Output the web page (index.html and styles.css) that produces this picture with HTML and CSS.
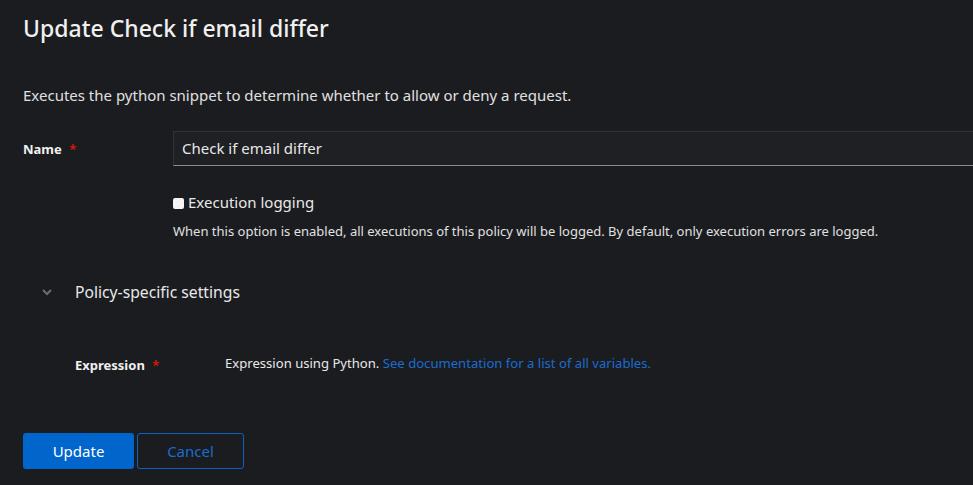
FILE: index.html
```html
<!DOCTYPE html>
<html>
<head>
<meta charset="utf-8">
<link rel="stylesheet" href="styles.css">
</head>
<body>
<div class="page">
  <h1 class="title">Update Check if email differ</h1>
  <p class="desc">Executes the python snippet to determine whether to allow or deny a request.</p>
  <div class="row name-row">
    <label class="label">Name <span class="req">*</span></label>
    <div class="input">Check if email differ</div>
  </div>
  <div class="row check-row">
    <div class="label"></div>
    <div class="check-col">
      <label class="check"><span class="box"></span>Execution logging</label>
      <div class="help">When this option is enabled, all executions of this policy will be logged. By default, only execution errors are logged.</div>
    </div>
  </div>
  <div class="section">
    <svg class="chev" width="10" height="8" viewBox="0 0 10 8"><path d="M1 2 L5 6 L9 2" fill="none" stroke="#6a6e73" stroke-width="2"/></svg>
    <span class="section-title">Policy-specific settings</span>
  </div>
  <div class="expr-row">
    <label class="label2">Expression <span class="req">*</span></label>
    <div class="expr-help">Expression using Python. <a class="link">See documentation for a list of all variables.</a></div>
  </div>
  <div class="actions">
    <button class="btn primary">Update</button>
    <button class="btn secondary">Cancel</button>
  </div>
</div>
</body>
</html>
```
FILE: styles.css
```css
html, body {
  margin: 0;
  padding: 0;
  background: #1b1c1f;
  color: #e0e0e0;
  font-family: "Noto Sans", "Open Sans", sans-serif;
  overflow: hidden;
}
.page {
  padding: 14px 0 0 23px;
}
.title {
  margin: 0;
  font-size: 23px;
  font-weight: 500;
  color: #f0f0f0;
  line-height: 28px;
}
.desc {
  margin: 41px 0 0 0;
  font-size: 15px;
  line-height: 24px;
  color: #e0e0e0;
}
.row {
  display: flex;
}
.name-row {
  margin-top: 24px;
  align-items: center;
}
.label {
  width: 150px;
  flex: none;
  font-size: 13px;
  font-weight: 700;
  color: #f0f0f0;
}
.req {
  color: #c9190b;
  margin-left: 4px;
  font-weight: 700;
}
.input {
  flex: 1;
  height: 35px;
  box-sizing: border-box;
  background: #1f2023;
  border-top: 1px solid #313235;
  border-left: 1px solid #313235;
  border-bottom: 1px solid #8a8d90;
  padding: 0 8px;
  font-size: 15px;
  line-height: 33px;
  color: #e8e8e8;
}
.check-row {
  margin-top: 26px;
}
.check {
  display: flex;
  align-items: center;
  font-size: 15px;
  line-height: 20px;
  color: #e8e8e8;
}
.box {
  width: 11px;
  height: 11px;
  background: #f5f5f5;
  border-radius: 2px;
  margin-right: 4px;
  margin-top: 2px;
}
.help {
  margin-top: 10px;
  font-size: 13px;
  line-height: 18px;
  color: #e0e0e0;
}
.section {
  margin-top: 42px;
  display: flex;
  align-items: center;
  padding-left: 19px;
}
.chev {
  margin-right: 23px;
}
.section-title {
  font-size: 15.7px;
  line-height: 20px;
  color: #e8e8e8;
}
.expr-row {
  display: flex;
  align-items: center;
  margin-top: 50px;
  padding-left: 52px;
}
.label2 {
  width: 150px;
  flex: none;
  font-size: 13px;
  font-weight: 700;
  color: #f0f0f0;
  padding-top: 4px;
}
.expr-help {
  font-size: 13.1px;
  color: #e8e8e8;
}
.link {
  color: #1a6ccf;
}
.actions {
  margin-top: 59px;
  display: flex;
  gap: 3px;
}
.btn {
  font-family: inherit;
  font-size: 15px;
  height: 36px;
  border-radius: 3px;
  cursor: pointer;
}
.primary {
  width: 111px;
  background: #0066cc;
  color: #ffffff;
  border: none;
}
.secondary {
  width: 107px;
  background: transparent;
  color: #1a6ccf;
  border: 1px solid #0f5fc2;
}
```
